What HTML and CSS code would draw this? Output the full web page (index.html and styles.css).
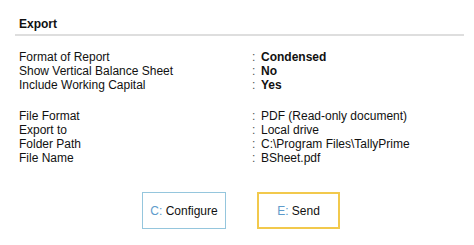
FILE: index.html
```html
<!DOCTYPE html>
<html lang="en">
<head>
    <meta charset="UTF-8">
    <title>Export</title>
    <link rel="stylesheet" href="styles.css">
</head>
<body>
    <div class="export-dialog">
        <div class="dialog-header">Export</div>

        <div class="field-group">
            <div class="field-row"><span class="field-label">Format of Report</span><span class="field-colon">:</span><span class="field-value bold">Condensed</span></div>
            <div class="field-row"><span class="field-label">Show Vertical Balance Sheet</span><span class="field-colon">:</span><span class="field-value bold">No</span></div>
            <div class="field-row"><span class="field-label">Include Working Capital</span><span class="field-colon">:</span><span class="field-value bold">Yes</span></div>
        </div>

        <div class="field-group">
            <div class="field-row"><span class="field-label">File Format</span><span class="field-colon">:</span><span class="field-value">PDF (Read-only document)</span></div>
            <div class="field-row"><span class="field-label">Export to</span><span class="field-colon">:</span><span class="field-value">Local drive</span></div>
            <div class="field-row"><span class="field-label">Folder Path</span><span class="field-colon">:</span><span class="field-value">C:\Program Files\TallyPrime</span></div>
            <div class="field-row"><span class="field-label">File Name</span><span class="field-colon">:</span><span class="field-value">BSheet.pdf</span></div>
        </div>

        <div class="button-bar">
            <button class="action-button configure"><span class="hotkey">C:</span> Configure</button>
            <button class="action-button send"><span class="hotkey">E:</span> Send</button>
        </div>
    </div>
</body>
</html>
```

FILE: styles.css
```css
body, html {
    margin: 0;
    padding: 0;
    width: 100%;
    height: 100%;
    background: #FFFFFF;
    font-family: 'Liberation Sans', Arial, sans-serif;
    color: #111111;
}

.export-dialog {
    padding: 17px 10px 0 15px;
}

.dialog-header {
    padding: 0 0 3px 4px;
    font-size: 12px;
    font-weight: bold;
    line-height: 14px;
    border-bottom: 2px solid #DEDEDE;
}

.field-group {
    display: flex;
    flex-direction: column;
    margin-top: 14px;
    padding-left: 4px;
}

.field-group + .field-group {
    margin-top: 17px;
}

.field-row {
    display: flex;
    font-size: 12px;
    line-height: 14px;
}

.field-label {
    width: 233px;
}

.field-colon {
    width: 9px;
    color: #555555;
}

.field-value.bold {
    font-weight: bold;
}

.button-bar {
    display: flex;
    gap: 31px;
    margin-top: 27px;
    padding-left: 127px;
}

.action-button {
    width: 84px;
    height: 37px;
    background: #FFFFFF;
    font-family: 'Liberation Sans', Arial, sans-serif;
    font-size: 12px;
    color: #111111;
    padding: 0;
    cursor: pointer;
}

.action-button.configure {
    border: 1.5px solid #95C6DD;
}

.action-button.send {
    width: 83px;
    border: 2px solid #F2C94C;
}

.hotkey {
    color: #5E9BCB;
}
```
